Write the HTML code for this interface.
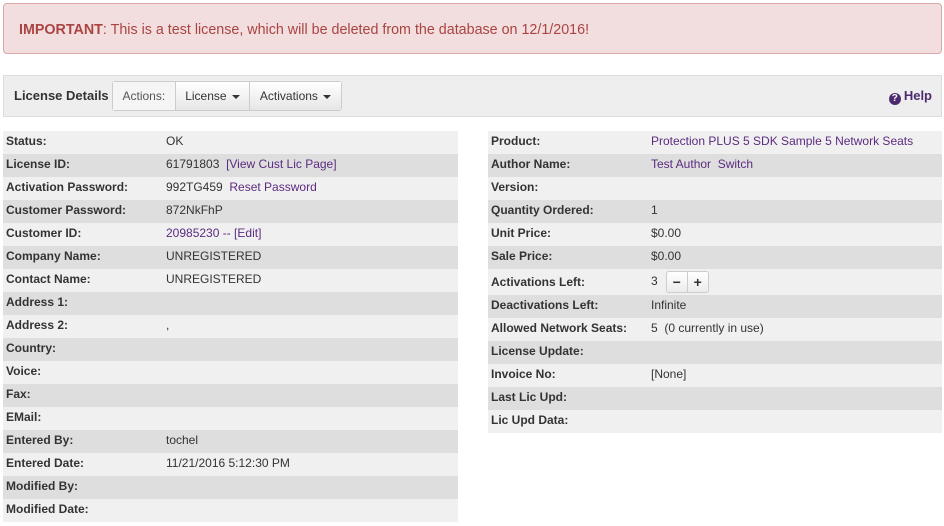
<!DOCTYPE html>
<html><head><style>
body{margin:0;width:944px;height:526px;background:#fff;font-family:"Liberation Sans",Arial,sans-serif;font-size:12px;color:#333;position:relative;overflow:hidden}
.alert{position:absolute;left:3px;top:3px;width:937px;height:49px;background:#f2dede;border:1px solid #dca7a7;border-radius:4px;color:#a94442;font-size:14.3px;line-height:52px}
.alert span{padding-left:15px}
.bar{position:absolute;left:3px;top:75px;width:937px;height:40px;background:#eee;border:1px solid #ddd}
.bar .t{position:absolute;left:10px;top:12px;font-weight:bold;font-size:13px;color:#333}
.btns{position:absolute;left:108px;top:5px;height:28px;display:flex;border:1px solid #ccc;border-radius:3px;background:#fff}
.btns div{padding:0 9.5px;line-height:28px;font-size:12px;border-left:1px solid #ccc;background:linear-gradient(#fff,#e6e6e6)}
.btns div:first-child{border-left:0;background:#f5f5f5;color:#555}
.car{display:inline-block;border-top:4px solid #333;border-left:4px solid transparent;border-right:4px solid transparent;vertical-align:middle;margin-left:2px}
.help{position:absolute;right:9px;top:12px;font-weight:bold;font-size:13px;color:#4b2a6e}
.help i{display:inline-block;width:12px;height:12px;border-radius:50%;background:#4b2a6e;color:#fff;font-style:normal;font-size:10px;line-height:12px;text-align:center;margin-right:3px;vertical-align:-1px}
table{position:absolute;border-collapse:collapse;top:131px}
td{height:23px;padding:0 3px;white-space:nowrap;font-size:12px;line-height:21px;vertical-align:top}
tr:nth-child(odd){background:#f0f0f0}
tr:nth-child(even){background:#dedede}
td.l{font-weight:bold}
a{color:#5b2b80;text-decoration:none}
.pm{display:inline-flex;border:1px solid #ccc;border-radius:3px;margin-left:8px;vertical-align:middle;background:linear-gradient(#fff,#ececec)}
.pm b{width:20px;height:20px;line-height:20px;text-align:center;font-size:14px}
.pm b+b{border-left:1px solid #ccc}
</style></head><body>
<div class="alert"><span><b>IMPORTANT</b>: This is a test license, which will be deleted from the database on 12/1/2016!</span></div>
<div class="bar"><div class="t">License Details</div>
<div class="btns"><div>Actions:</div><div>License <span class="car"></span></div><div>Activations <span class="car"></span></div></div>
<div class="help"><i>?</i>Help</div></div>
<table style="left:3px;width:455px">
<col style="width:160px"><col>
<tr><td class="l">Status:</td><td>OK</td></tr>
<tr><td class="l">License ID:</td><td>61791803 &nbsp;<a>[View Cust Lic Page]</a></td></tr>
<tr><td class="l">Activation Password:</td><td>992TG459 &nbsp;<a>Reset Password</a></td></tr>
<tr><td class="l">Customer Password:</td><td>872NkFhP</td></tr>
<tr><td class="l">Customer ID:</td><td><a>20985230 -- [Edit]</a></td></tr>
<tr><td class="l">Company Name:</td><td>UNREGISTERED</td></tr>
<tr><td class="l">Contact Name:</td><td>UNREGISTERED</td></tr>
<tr><td class="l">Address 1:</td><td></td></tr>
<tr><td class="l">Address 2:</td><td>,</td></tr>
<tr><td class="l">Country:</td><td></td></tr>
<tr><td class="l">Voice:</td><td></td></tr>
<tr><td class="l">Fax:</td><td></td></tr>
<tr><td class="l">EMail:</td><td></td></tr>
<tr><td class="l">Entered By:</td><td>tochel</td></tr>
<tr><td class="l">Entered Date:</td><td>11/21/2016 5:12:30 PM</td></tr>
<tr><td class="l">Modified By:</td><td></td></tr>
<tr><td class="l">Modified Date:</td><td></td></tr>
</table>
<table style="left:488px;width:454px">
<col style="width:160px"><col>
<tr><td class="l">Product:</td><td><a>Protection PLUS 5 SDK Sample 5 Network Seats</a></td></tr>
<tr><td class="l">Author Name:</td><td><a>Test Author &nbsp;Switch</a></td></tr>
<tr><td class="l">Version:</td><td></td></tr>
<tr><td class="l">Quantity Ordered:</td><td>1</td></tr>
<tr><td class="l">Unit Price:</td><td>$0.00</td></tr>
<tr><td class="l">Sale Price:</td><td>$0.00</td></tr>
<tr><td class="l" style="height:26px;vertical-align:middle">Activations Left:</td><td style="vertical-align:middle">3<span class="pm"><b>&minus;</b><b>+</b></span></td></tr>
<tr><td class="l">Deactivations Left:</td><td>Infinite</td></tr>
<tr><td class="l">Allowed Network Seats:</td><td>5 &nbsp;(0 currently in use)</td></tr>
<tr><td class="l">License Update:</td><td></td></tr>
<tr><td class="l">Invoice No:</td><td>[None]</td></tr>
<tr><td class="l">Last Lic Upd:</td><td></td></tr>
<tr><td class="l">Lic Upd Data:</td><td></td></tr>
</table>
</body></html>
